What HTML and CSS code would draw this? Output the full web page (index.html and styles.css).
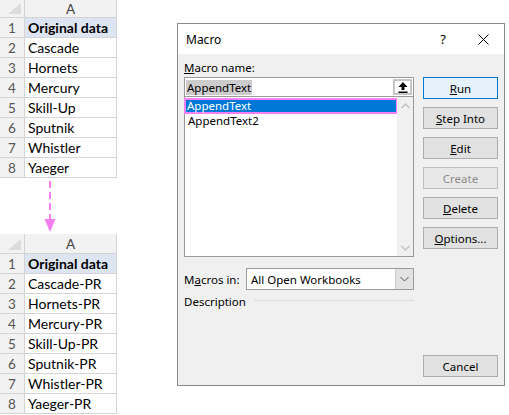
FILE: index.html
```html
<!DOCTYPE html>
<html>
<head>
<meta charset="utf-8">
<link rel="stylesheet" href="styles.css">
</head>
<body>
<div class="left">
  <div class="sheet sheet-top">
    <div class="corner hdr"><span class="tri"></span></div><div class="colhdr hdr">A</div>
    <div class="rn">1</div><div class="cell head">Original data</div>
    <div class="rn">2</div><div class="cell">Cascade</div>
    <div class="rn">3</div><div class="cell">Hornets</div>
    <div class="rn">4</div><div class="cell">Mercury</div>
    <div class="rn">5</div><div class="cell">Skill-Up</div>
    <div class="rn">6</div><div class="cell">Sputnik</div>
    <div class="rn">7</div><div class="cell">Whistler</div>
    <div class="rn">8</div><div class="cell">Yaeger</div>
  </div>
  <div class="arrow">
    <svg width="117" height="56" viewBox="0 0 117 56">
      <line x1="50" y1="3" x2="50" y2="44" stroke="#f27ef2" stroke-width="2" stroke-dasharray="7 4"/>
      <polygon points="44.5,41 55.5,41 50,54" fill="#f27ef2"/>
    </svg>
  </div>
  <div class="sheet sheet-bottom">
    <div class="corner hdr"><span class="tri"></span></div><div class="colhdr hdr">A</div>
    <div class="rn">1</div><div class="cell head">Original data</div>
    <div class="rn">2</div><div class="cell">Cascade-PR</div>
    <div class="rn">3</div><div class="cell">Hornets-PR</div>
    <div class="rn">4</div><div class="cell">Mercury-PR</div>
    <div class="rn">5</div><div class="cell">Skill-Up-PR</div>
    <div class="rn">6</div><div class="cell">Sputnik-PR</div>
    <div class="rn">7</div><div class="cell">Whistler-PR</div>
    <div class="rn">8</div><div class="cell">Yaeger-PR</div>
  </div>
</div>

<div class="dialog">
  <div class="titlebar">
    <span class="title">Macro</span>
    <span class="help">?</span>
    <svg class="close" width="11" height="11" viewBox="0 0 11 11">
      <line x1="0.5" y1="0.5" x2="10.5" y2="10.5" stroke="#000" stroke-width="1"/>
      <line x1="10.5" y1="0.5" x2="0.5" y2="10.5" stroke="#000" stroke-width="1"/>
    </svg>
  </div>
  <div class="dbody">
    <div class="lcol">
      <div class="label"><u>M</u>acro name:</div>
      <div class="namebox">
        <span class="seltext">AppendText</span>
        <span class="upbtn">
          <svg width="10" height="11" viewBox="0 0 10 11">
            <polygon points="5,0 9.5,5 6.5,5 6.5,8 3.5,8 3.5,5 0.5,5" fill="#000"/>
            <rect x="0.5" y="9.5" width="9" height="1.5" fill="#000"/>
          </svg>
        </span>
      </div>
      <div class="listbox">
        <div class="items">
          <div class="item selected">AppendText</div>
          <div class="item">AppendText2</div>
        </div>
        <div class="scroll">
          <svg width="9" height="6" viewBox="0 0 9 6"><polyline points="0.5,5 4.5,1 8.5,5" fill="none" stroke="#c2c2c2" stroke-width="1.4"/></svg>
          <svg width="9" height="6" viewBox="0 0 9 6"><polyline points="0.5,1 4.5,5 8.5,1" fill="none" stroke="#c2c2c2" stroke-width="1.4"/></svg>
        </div>
      </div>
      <div class="combo-row">
        <span class="label2">M<u>a</u>cros in:</span>
        <div class="combo">
          <span class="combotext">All Open Workbooks</span>
          <span class="dropbtn">
            <svg width="9" height="6" viewBox="0 0 9 6"><polyline points="0.5,1 4.5,5 8.5,1" fill="none" stroke="#555" stroke-width="1"/></svg>
          </span>
        </div>
      </div>
      <div class="desc-row">
        <span class="desc">Description</span>
        <span class="rule"></span>
      </div>
    </div>
    <div class="rcol">
      <div class="btn primary"><u>R</u>un</div>
      <div class="btn"><u>S</u>tep Into</div>
      <div class="btn"><u>E</u>dit</div>
      <div class="btn disabled">Create</div>
      <div class="btn"><u>D</u>elete</div>
      <div class="btn"><u>O</u>ptions...</div>
      <div class="btn cancel">Cancel</div>
    </div>
  </div>
</div>
</body>
</html>
```

FILE: styles.css
```css
html, body {
  margin: 0;
  padding: 0;
  background: #ffffff;
}
body {
  width: 509px;
  height: 415px;
  display: flex;
  align-items: flex-start;
  overflow: hidden;
}
.left {
  width: 117px;
  display: flex;
  flex-direction: column;
}
.sheet {
  display: grid;
  grid-template-columns: 25px 92px;
  grid-auto-rows: 20px;
  font-family: Lato, "Liberation Sans", sans-serif;
  font-size: 14px;
  color: #000;
}
.sheet-top {
  grid-template-rows: 18px;
}
.sheet > div {
  box-sizing: border-box;
  border-right: 1px solid #d4d4d4;
  border-bottom: 1px solid #d4d4d4;
  display: flex;
  align-items: center;
}
.hdr {
  background: #f2f2f2;
}
.corner {
  position: relative;
}
.tri {
  position: absolute;
  right: 3px;
  bottom: 3px;
  width: 0;
  height: 0;
  border-left: 13px solid transparent;
  border-bottom: 11px solid #dcdcdc;
}
.colhdr {
  justify-content: center;
  color: #444;
  font-size: 13.5px;
}
.rn {
  background: #f2f2f2;
  justify-content: center;
  color: #555;
  font-size: 13.5px;
}
.cell {
  padding-left: 3px;
}
.cell.head {
  background: #dde5f3;
  font-weight: bold;
}
.arrow {
  height: 56px;
}
.arrow svg {
  display: block;
}

.dialog {
  margin-left: 60px;
  margin-top: 23px;
  width: 328px;
  height: 363px;
  box-sizing: border-box;
  border: 1px solid #8a8a8a;
  background: #f0f0f0;
  display: flex;
  flex-direction: column;
  font-family: "Noto Sans", "Open Sans", sans-serif;
  font-size: 11.5px;
  color: #000;
}
.titlebar {
  height: 30px;
  background: #ffffff;
  display: flex;
  align-items: center;
  padding-left: 8px;
  padding-right: 15px;
  flex-shrink: 0;
}
.title {
  font-size: 12px;
  flex: 1;
}
.help {
  font-size: 13px;
  margin-right: 32px;
}
.close {
  display: block;
}
.dbody {
  flex: 1;
  display: flex;
  padding: 6px 6px 8px 6px;
  gap: 9px;
}
.lcol {
  width: 230px;
  display: flex;
  flex-direction: column;
}
.label {
  height: 16px;
  line-height: 16px;
  margin-bottom: 1px;
}
.namebox {
  height: 20px;
  box-sizing: border-box;
  border: 1px solid #9a9a9a;
  background: #fff;
  display: flex;
  align-items: center;
  padding-left: 1px;
  padding-right: 1px;
}
.seltext {
  background: #cccccc;
  line-height: 15px;
  padding: 0 1px;
  flex: none;
}
.upbtn {
  margin-left: auto;
  width: 19px;
  height: 16px;
  box-sizing: border-box;
  border: 2px solid #c6c6c6;
  background: #fff;
  display: flex;
  align-items: center;
  justify-content: center;
}
.upbtn svg {
  display: block;
}
.listbox {
  height: 160px;
  box-sizing: border-box;
  border: 1px solid #9a9a9a;
  border-top: none;
  background: #fff;
  display: flex;
}
.items {
  flex: 1;
  padding-top: 1px;
}
.item {
  height: 14px;
  line-height: 14px;
  padding-left: 3px;
}
.item.selected {
  background: #0078d7;
  color: #fff;
  border: 2px solid #f77ff7;
  line-height: 12px;
  box-sizing: border-box;
  padding-left: 1px;
  margin-left: -1px;
  margin-right: -1px;
  height: 16px;
}
.scroll {
  width: 16px;
  background: #f0f0f0;
  display: flex;
  flex-direction: column;
  align-items: center;
  justify-content: space-between;
  padding: 6px 0 5px 0;
}
.scroll svg {
  display: block;
}
.combo-row {
  margin-top: 11px;
  display: flex;
  align-items: center;
}
.label2 {
  width: 62px;
}
.combo {
  flex: 1;
  height: 22px;
  box-sizing: border-box;
  border: 1px solid #9a9a9a;
  background: #fff;
  display: flex;
  align-items: center;
  padding-left: 4px;
}
.combotext {
  flex: 1;
}
.dropbtn {
  width: 17px;
  height: 20px;
  background: #e3e3e3;
  border-left: 1px solid #cfcfcf;
  display: flex;
  align-items: center;
  justify-content: center;
}
.dropbtn svg {
  display: block;
}
.desc-row {
  margin-top: 4px;
  height: 14px;
  display: flex;
  align-items: center;
}
.rule {
  flex: 1;
  height: 1px;
  background: #dcdcdc;
  margin-left: 8px;
  margin-top: -1px;
}
.rcol {
  width: 75px;
  display: flex;
  flex-direction: column;
  padding-top: 17px;
}
.btn {
  height: 22px;
  box-sizing: border-box;
  border: 1px solid #adadad;
  background: #e1e1e1;
  display: flex;
  align-items: center;
  justify-content: center;
  margin-bottom: 8px;
}
.btn.primary {
  border-color: #0078d7;
  background: #e5f1fb;
}
.btn.disabled {
  color: #8c8c8c;
  border-color: #bfbfbf;
  background: #e8e8e8;
}
.btn.cancel {
  margin-top: auto;
  margin-bottom: 0;
}
```
